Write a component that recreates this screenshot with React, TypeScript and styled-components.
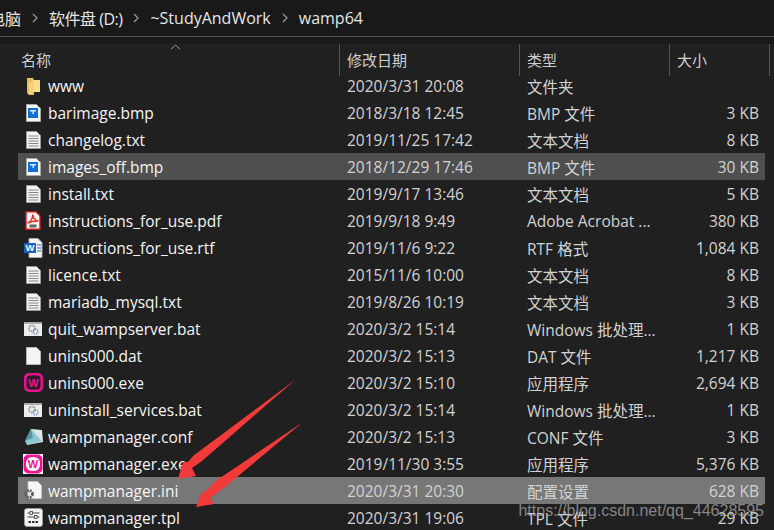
import { FC } from 'react';
import styled, { createGlobalStyle } from 'styled-components';

const GlobalStyle = createGlobalStyle`
	html, body {
		margin: 0;
		padding: 0;
		background: #202020;
	}
	body {
		font-family: 'Open Sans', 'Noto Sans CJK SC', sans-serif;
	}
`;

const Page = styled.div`
	width: 774px;
	height: 530px;
	position: relative;
	overflow: hidden;
	background: #202020;
`;

const AddressBar = styled.div`
	height: 36px;
	display: flex;
	align-items: center;
	background: #191919;
	border-bottom: 1px solid #4f4f4f;
	color: #e6e6e6;
	font-size: 16px;
`;

const Crumb = styled.span<{ $clipped?: boolean; $tight?: boolean }>`
	margin-left: ${(p) => (p.$clipped ? '-11px' : '0')};
	letter-spacing: ${(p) => (p.$tight ? '-0.5px' : '0')};
	white-space: nowrap;
`;

const Chevron = styled.svg`
	width: 6px;
	height: 10px;
	margin: 0 11px;
	flex: none;
`;

const Spacer = styled.div`
	height: 7px;
	background: #1a1a1a;
`;

const Columns = styled.div`
	display: grid;
	grid-template-columns: 322px 180px 150px 100px;
	margin-left: 18px;
`;

const Header = styled(Columns)`
	height: 32px;
	margin-bottom: -4px;
	color: #cfcfcf;
	font-size: 15px;
`;

const HeaderCell = styled.div<{ $first?: boolean }>`
	position: relative;
	display: flex;
	align-items: center;
	padding: 0 0 2px ${(p) => (p.$first ? '3px' : '7px')};
	border-right: 1px solid #555;
`;

const SortCaret = styled.svg`
	position: absolute;
	left: 152px;
	top: 0;
	width: 11px;
	height: 6px;
`;

const Row = styled(Columns)<{ $shade?: string }>`
	height: 27px;
	width: 747px;
	grid-template-columns: 322px 180px 150px 95px;
	align-items: center;
	background: ${(p) => p.$shade || 'transparent'};
	font-size: 15.5px;
	color: #d2d2d2;
`;

const NameCell = styled.div`
	display: flex;
	align-items: center;
	gap: 4px;
	padding-left: 4px;
	color: #f5f5f5;
	white-space: nowrap;
`;

const IconBox = styled.span`
	width: 22px;
	height: 22px;
	flex: none;
	display: flex;
	align-items: center;
	justify-content: center;
`;

const Cell = styled.div`
	padding: 1px 0 0 7px;
	white-space: nowrap;
	overflow: hidden;
`;

const SizeCell = styled(Cell)`
	padding: 1px 6px 0 0;
	text-align: right;
`;

const FileName = styled.span`
	padding-top: 1px;
`;

const Arrows = styled.svg`
	position: absolute;
	left: 0;
	top: 0;
	width: 774px;
	height: 530px;
	pointer-events: none;
`;

const Watermark = styled.div`
	position: absolute;
	right: 10px;
	top: 502px;
	font-family: 'Liberation Sans', Arial, sans-serif;
	font-size: 16px;
	color: rgba(175, 175, 175, 0.72);
	white-space: nowrap;
`;

const PageLines: FC = () => (
	<svg width="15" height="18" viewBox="0 0 15 18">
		<path d="M.5.5h10l4 4v13H.5z" fill="#f2f2f2" stroke="#9a9a9a" />
		<path d="M2.5 5h10M2.5 7.5h10M2.5 10h10M2.5 12.5h10M2.5 15h10" stroke="#8a8a8a" />
	</svg>
);

const BlankPage: FC = () => (
	<svg width="15" height="18" viewBox="0 0 15 18">
		<path d="M.5.5h10l4 4v13H.5z" fill="#f4f4f4" stroke="#b5b5b5" />
	</svg>
);

const FolderIcon: FC = () => (
	<svg width="13" height="18" viewBox="0 0 13 18">
		<path d="M0 1h6l1 2v15H2l-2-2z" fill="#e8bd5f" />
		<path d="M6 3h7v12H6z" fill="#fbdc8c" />
		<path d="M2 18l5-3V3L2 6z" fill="#f7d27a" />
	</svg>
);

const BmpIcon: FC = () => (
	<svg width="15" height="18" viewBox="0 0 15 18">
		<path d="M.5.5h10l4 4v13H.5z" fill="#f6f6f6" stroke="#a8a8a8" />
		<rect x="2" y="4" width="10" height="10" fill="#0f6fd6" />
		<path d="M4 6h6v1.5H8V10H6.5V7.5H4z" fill="#dbeeff" />
	</svg>
);

const PdfIcon: FC = () => (
	<svg width="16" height="19" viewBox="0 0 16 19">
		<path d="M1 .8h10l4 4v13.4H1z" fill="#fbf3f3" stroke="#c4201f" strokeWidth="1.4" />
		<path d="M2.5 12c3-1 5-4 5.3-8.500.2 3.500 2.500 6 5.700 6.500-3.500-.2-7 .4-11 2z" fill="none" stroke="#e0332e" strokeWidth="1.5" />
		<rect x="4.500" y="13.500" width="7" height="3" fill="#666" />
	</svg>
);

const WordIcon: FC = () => (
	<svg width="19" height="20" viewBox="0 0 19 20">
		<path d="M5 .5h9l4 4v15H5z" fill="#f6f6f6" stroke="#a8a8a8" />
		<path d="M13 7h4M13 10h4M13 13h4" stroke="#2a5fb0" />
		<rect x="0" y="5" width="12" height="10" fill="#1c5dbf" />
		<text x="6" y="13.4" fontSize="9.5" fontWeight="700" fill="#fff" textAnchor="middle" fontFamily="Liberation Sans">W</text>
	</svg>
);

const BatIcon: FC = () => (
	<svg width="18" height="14" viewBox="0 0 18 14">
		<rect width="18" height="14" fill="#ececec" />
		<rect width="18" height="2" fill="#a9a9a9" />
		<circle cx="8" cy="6.5" r="3" fill="none" stroke="#8b8b8b" strokeWidth="1.6" strokeDasharray="1.4 .8" />
		<circle cx="11.500" cy="9.500" r="2.400" fill="none" stroke="#6f93c9" strokeWidth="1.4" strokeDasharray="1.2 .7" />
	</svg>
);

const WampRing: FC = () => (
	<svg width="19" height="19" viewBox="0 0 19 19">
		<rect width="19" height="19" rx="5" fill="#e5128f" />
		<rect x="2.500" y="2.500" width="14" height="14" rx="4" fill="#2b1a25" />
		<text x="9.500" y="13.500" fontSize="11" fontWeight="700" fill="#e5128f" textAnchor="middle" fontFamily="Liberation Sans">W</text>
	</svg>
);

const WampSquare: FC = () => (
	<svg width="20" height="20" viewBox="0 0 20 20">
		<rect width="20" height="20" fill="#fff" />
		<rect x=".5" y=".5" width="19" height="19" rx="5" fill="#f0148f" />
		<rect x="3" y="3" width="14" height="14" rx="6" fill="#fff" />
		<text x="10" y="14" fontSize="11" fontWeight="700" fill="#f0148f" textAnchor="middle" fontFamily="Liberation Sans">W</text>
	</svg>
);

const ConfIcon: FC = () => (
	<svg width="19" height="18" viewBox="0 0 19 18">
		<path d="M7 1l11 1 1 12-16 3z" fill="#dfe7e8" />
		<path d="M7 1L1 13l2 4 15-4z" fill="#8cc7d2" />
		<path d="M7 1L1 13l8-3z" fill="#5b93a6" />
	</svg>
);

const IniIcon: FC = () => (
	<svg width="18" height="19" viewBox="0 0 18 19">
		<path d="M4 .5h9.500l4 4v13H4z" fill="#f6f6f6" stroke="#c4c4c4" />
		<circle cx="5" cy="13" r="3.500" fill="none" stroke="#5a5a5a" strokeWidth="2.800" strokeDasharray="1.800 1" />
		<circle cx="5" cy="13" r="1.400" fill="#dcdcdc" />
	</svg>
);

const TplIcon: FC = () => (
	<svg width="19" height="19" viewBox="0 0 19 19">
		<rect x=".5" y=".5" width="18" height="18" rx="2.500" fill="#f4f4f4" stroke="#9c9c9c" />
		<path d="M3.500 5h12M3.500 9h12" stroke="#444" />
		<rect x="6" y="3.500" width="2.500" height="3" fill="#f4f4f4" stroke="#444" strokeWidth=".8" />
		<rect x="10.500" y="7.500" width="2.500" height="3" fill="#f4f4f4" stroke="#444" strokeWidth=".8" />
		<path d="M4.500 14h10" stroke="#333" strokeWidth="2" strokeDasharray="2.500 1" />
	</svg>
);

type FileRow = {
	icon: JSX.Element;
	name: string;
	date: string;
	kind: string;
	size: string;
	shade?: string;
};

const files: FileRow[] = [
	{ icon: <FolderIcon />, name: 'www', date: '2020/3/31 20:08', kind: '文件夹', size: '' },
	{ icon: <BmpIcon />, name: 'barimage.bmp', date: '2018/3/18 12:45', kind: 'BMP 文件', size: '3 KB' },
	{ icon: <PageLines />, name: 'changelog.txt', date: '2019/11/25 17:42', kind: '文本文档', size: '8 KB' },
	{ icon: <BmpIcon />, name: 'images_off.bmp', date: '2018/12/29 17:46', kind: 'BMP 文件', size: '30 KB', shade: '#4f4f4f' },
	{ icon: <PageLines />, name: 'install.txt', date: '2019/9/17 13:46', kind: '文本文档', size: '5 KB' },
	{ icon: <PdfIcon />, name: 'instructions_for_use.pdf', date: '2019/9/18 9:49', kind: 'Adobe Acrobat ...', size: '380 KB' },
	{ icon: <WordIcon />, name: 'instructions_for_use.rtf', date: '2019/11/6 9:22', kind: 'RTF 格式', size: '1,084 KB' },
	{ icon: <PageLines />, name: 'licence.txt', date: '2015/11/6 10:00', kind: '文本文档', size: '8 KB' },
	{ icon: <PageLines />, name: 'mariadb_mysql.txt', date: '2019/8/26 10:19', kind: '文本文档', size: '3 KB' },
	{ icon: <BatIcon />, name: 'quit_wampserver.bat', date: '2020/3/2 15:14', kind: 'Windows 批处理...', size: '1 KB' },
	{ icon: <BlankPage />, name: 'unins000.dat', date: '2020/3/2 15:13', kind: 'DAT 文件', size: '1,217 KB' },
	{ icon: <WampRing />, name: 'unins000.exe', date: '2020/3/2 15:10', kind: '应用程序', size: '2,694 KB' },
	{ icon: <BatIcon />, name: 'uninstall_services.bat', date: '2020/3/2 15:14', kind: 'Windows 批处理...', size: '1 KB' },
	{ icon: <ConfIcon />, name: 'wampmanager.conf', date: '2020/3/2 15:13', kind: 'CONF 文件', size: '3 KB' },
	{ icon: <WampSquare />, name: 'wampmanager.exe', date: '2019/11/30 3:55', kind: '应用程序', size: '5,376 KB' },
	{ icon: <IniIcon />, name: 'wampmanager.ini', date: '2020/3/31 20:30', kind: '配置设置', size: '628 KB', shade: '#777777' },
	{ icon: <TplIcon />, name: 'wampmanager.tpl', date: '2020/3/31 19:06', kind: 'TPL 文件', size: '29 KB' },
];

const Sep: FC = () => (
	<Chevron viewBox="0 0 6 10">
		<path d="M1 1l4 4-4 4" fill="none" stroke="#9a9a9a" strokeWidth="1.2" />
	</Chevron>
);

const App: FC = () => {
	return (
		<Page>
			<GlobalStyle />
			<AddressBar>
				<Crumb $clipped>电脑</Crumb>
				<Sep />
				<Crumb $tight>软件盘 (D:)</Crumb>
				<Sep />
				<Crumb>~StudyAndWork</Crumb>
				<Sep />
				<Crumb>wamp64</Crumb>
			</AddressBar>
			<Spacer />
			<Header>
				<HeaderCell $first>
					名称
					<SortCaret viewBox="0 0 11 6">
						<path d="M1 5l4.500-4L10 5" fill="none" stroke="#9a9a9a" />
					</SortCaret>
				</HeaderCell>
				<HeaderCell>修改日期</HeaderCell>
				<HeaderCell>类型</HeaderCell>
				<HeaderCell>大小</HeaderCell>
			</Header>
			{files.map((f) => (
				<Row key={f.name} $shade={f.shade}>
					<NameCell>
						<IconBox>{f.icon}</IconBox>
						<FileName>{f.name}</FileName>
					</NameCell>
					<Cell>{f.date}</Cell>
					<Cell>{f.kind}</Cell>
					<SizeCell>{f.size}</SizeCell>
				</Row>
			))}
			<Arrows viewBox="0 0 774 530">
				<path d="M295 380L202 461 192 468 196 476 178 479 183 462 188 462 193 456z" fill="#f23a3a" />
				<path d="M303 422L225 487 210 498 214 504 196 507 202 492 205 492 217 480z" fill="#f23a3a" />
			</Arrows>
			<Watermark>https://blog.csdn.net/qq_44628595</Watermark>
		</Page>
	);
};

export default App;
